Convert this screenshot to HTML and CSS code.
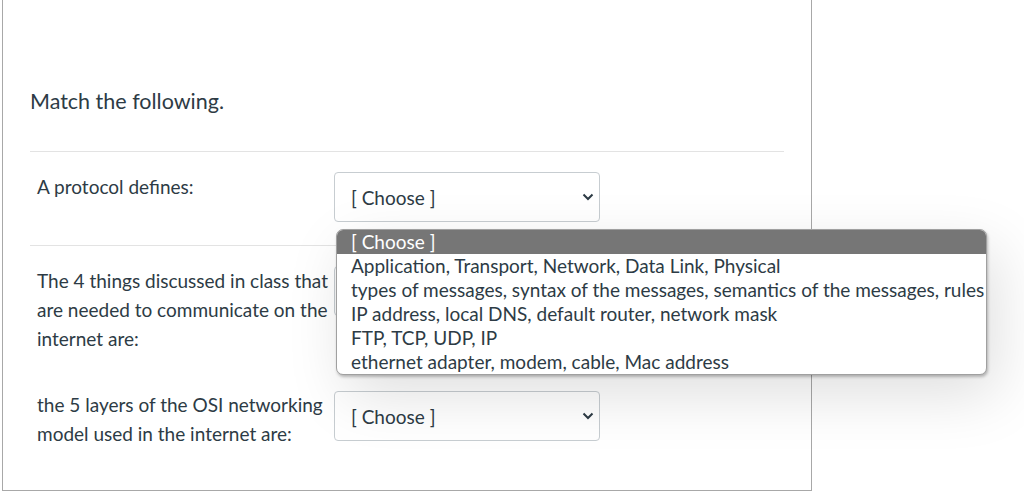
FILE: index.html
```html
<!DOCTYPE html>
<html lang="en">
<head>
  <meta charset="UTF-8">
  <meta name="viewport" content="width=device-width, initial-scale=1.0">
  <title>Quiz Question</title>
  <link rel="stylesheet" href="styles.css">
</head>
<body>
  <div class="question-card">
    <div class="question-text">Match the following.</div>

    <div class="answers">
      <div class="answer-row">
        <label class="answer-label" for="match-1">A protocol defines:</label>
        <div class="select-wrap">
          <select id="match-1" class="match-select">
            <option>[ Choose ]</option>
          </select>
          <svg class="chevron" width="12" height="8" viewBox="0 0 12 8"><path d="M1.5 1.5 L6 6 L10.5 1.5" fill="none" stroke="#2d3b45" stroke-width="2"/></svg>
        </div>
      </div>

      <div class="answer-row">
        <label class="answer-label" for="match-2">The 4 things discussed in class that are needed to communicate on the internet are:</label>
        <div class="select-wrap">
          <select id="match-2" class="match-select">
            <option>[ Choose ]</option>
          </select>
          <svg class="chevron" width="12" height="8" viewBox="0 0 12 8"><path d="M1.5 1.5 L6 6 L10.5 1.5" fill="none" stroke="#2d3b45" stroke-width="2"/></svg>

          <!-- open dropdown list -->
          <ul class="dropdown-list">
            <li class="active">[ Choose ]</li>
            <li>Application, Transport, Network, Data Link, Physical</li>
            <li>types of messages, syntax of the messages, semantics of the messages, rules</li>
            <li>IP address, local DNS, default router, network mask</li>
            <li>FTP, TCP, UDP, IP</li>
            <li>ethernet adapter, modem, cable, Mac address</li>
          </ul>
        </div>
      </div>

      <div class="answer-row last">
        <label class="answer-label" for="match-3">the 5 layers of the OSI networking model used in the internet are:</label>
        <div class="select-wrap">
          <select id="match-3" class="match-select">
            <option>[ Choose ]</option>
          </select>
          <svg class="chevron" width="12" height="8" viewBox="0 0 12 8"><path d="M1.5 1.5 L6 6 L10.5 1.5" fill="none" stroke="#2d3b45" stroke-width="2"/></svg>
        </div>
      </div>
    </div>
  </div>
</body>
</html>
```

FILE: styles.css
```css
/* General Reset */
* {
  margin: 0;
  padding: 0;
  box-sizing: border-box;
  font-family: 'Lato', 'Noto Sans', sans-serif;
}

body {
  background: #fff;
  color: #2d3b45;
}

.question-card {
  width: 810px;
  margin-left: 2px;
  border: 1px solid #a8a8a8;
  border-top: none;
  padding: 85px 27px 26px 27px;
}

.question-text {
  font-size: 21.5px;
  line-height: 33px;
  margin-bottom: 33px;
}

.answer-row {
  display: grid;
  grid-template-columns: 297px 266px;
  border-top: 1px solid #e3e3e3;
  padding: 20px 0 14px 7px;
}

.answer-row.last {
  border-top-color: transparent;
  padding-top: 22px;
}

.answer-row.last .select-wrap {
  margin-top: 1px;
}

.answer-label {
  font-size: 19px;
  line-height: 29px;
}

.select-wrap {
  position: relative;
  height: 59px;
}

.match-select {
  appearance: none;
  -webkit-appearance: none;
  width: 266px;
  height: 50px;
  border: 1px solid #c7cdd1;
  border-radius: 4px;
  background: #fff;
  color: #2d3b45;
  font-size: 19px;
  padding: 0 16px;
}

.chevron {
  position: absolute;
  right: 6px;
  top: 21px;
}

.dropdown-list {
  position: absolute;
  left: 2px;
  top: -37px;
  width: 651px;
  list-style: none;
  background: #fff;
  border: 1px solid #a0a0a0;
  border-radius: 7px;
  overflow: hidden;
  box-shadow: 1px 2px 3px rgba(0, 0, 0, 0.25), 10px 20px 60px rgba(0, 0, 0, 0.13);
  z-index: 10;
}

.dropdown-list li {
  font-size: 19px;
  line-height: 24px;
  padding-left: 14px;
  white-space: nowrap;
}

.dropdown-list li.active {
  background: #767676;
  color: #fff;
}
```
